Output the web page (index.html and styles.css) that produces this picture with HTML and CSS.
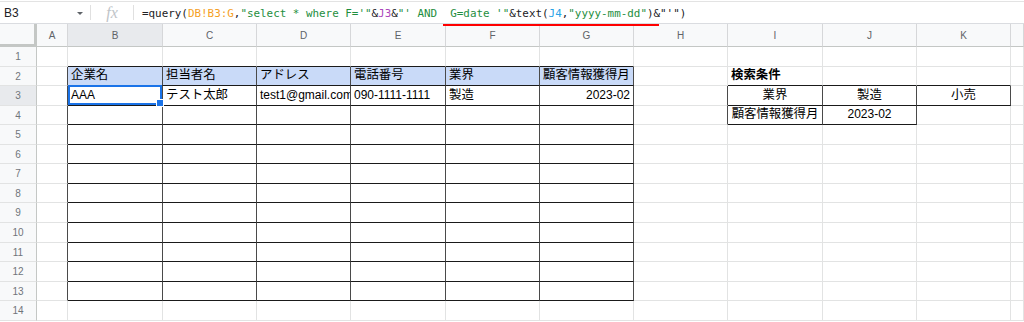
FILE: index.html
```html
<!DOCTYPE html>
<html lang="ja">
<head>
<meta charset="utf-8">
<title>Sheet</title>
<link rel="stylesheet" href="styles.css">
</head>
<body>
<div class="fbar">
  <div class="namebox"><span>B3</span><span class="tri"></span></div>
  <div class="sep"></div>
  <div class="fx">fx</div>
  <div class="sep"></div>
  <div class="formula">=query(<span class="fo">DB!B3:G</span>,<span class="fg">"select * where F='"</span>&amp;<span class="fp">J3</span>&amp;<span class="fg">"' AND  G=date '"</span>&amp;text(<span class="fb">J4</span>,<span class="fg">"yyyy-mm-dd"</span>)&amp;"'")</div>
</div>
<div class="mark"></div>
<div class="sheet">
  <!-- header -->
  <div class="h corner"></div><div class="h">A</div><div class="h hs">B</div><div class="h">C</div><div class="h">D</div><div class="h">E</div><div class="h">F</div><div class="h">G</div><div class="h">H</div><div class="h">I</div><div class="h">J</div><div class="h">K</div><div class="h"></div>
  <!-- 1 -->
  <div class="r">1</div><div class="c"></div><div class="c bb"></div><div class="c bb"></div><div class="c bb"></div><div class="c bb"></div><div class="c bb"></div><div class="c bb"></div><div class="c"></div><div class="c"></div><div class="c"></div><div class="c"></div><div class="c"></div>
  <!-- 2 -->
  <div class="r">2</div><div class="c br"></div><div class="c ja hd br bb">企業名</div><div class="c ja hd br bb">担当者名</div><div class="c ja hd br bb">アドレス</div><div class="c ja hd br bb">電話番号</div><div class="c ja hd br bb">業界</div><div class="c ja hd br bb">顧客情報獲得月</div><div class="c"></div><div class="c ja bb bold">検索条件</div><div class="c bb"></div><div class="c bb"></div><div class="c"></div>
  <!-- 3 -->
  <div class="r rs">3</div><div class="c br"></div><div class="c br bb sel">AAA</div><div class="c ja br bb">テスト太郎</div><div class="c br bb">test1@gmail.com</div><div class="c br bb">090-1111-1111</div><div class="c ja br bb">製造</div><div class="c br bb right">2023-02</div><div class="c br"></div><div class="c ja br bb mid">業界</div><div class="c ja br bb mid">製造</div><div class="c ja br bb mid">小売</div><div class="c"></div>
  <!-- 4 -->
  <div class="r">4</div><div class="c br"></div><div class="c br bb"></div><div class="c br bb"></div><div class="c br bb"></div><div class="c br bb"></div><div class="c br bb"></div><div class="c br bb"></div><div class="c br"></div><div class="c ja br bb mid">顧客情報獲得月</div><div class="c br bb mid">2023-02</div><div class="c"></div><div class="c"></div>
  <!-- 5 -->
  <div class="r">5</div><div class="c br"></div><div class="c br bb"></div><div class="c br bb"></div><div class="c br bb"></div><div class="c br bb"></div><div class="c br bb"></div><div class="c br bb"></div><div class="c"></div><div class="c"></div><div class="c"></div><div class="c"></div><div class="c"></div>
  <!-- 6 -->
  <div class="r">6</div><div class="c br"></div><div class="c br bb"></div><div class="c br bb"></div><div class="c br bb"></div><div class="c br bb"></div><div class="c br bb"></div><div class="c br bb"></div><div class="c"></div><div class="c"></div><div class="c"></div><div class="c"></div><div class="c"></div>
  <!-- 7 -->
  <div class="r">7</div><div class="c br"></div><div class="c br bb"></div><div class="c br bb"></div><div class="c br bb"></div><div class="c br bb"></div><div class="c br bb"></div><div class="c br bb"></div><div class="c"></div><div class="c"></div><div class="c"></div><div class="c"></div><div class="c"></div>
  <!-- 8 -->
  <div class="r">8</div><div class="c br"></div><div class="c br bb"></div><div class="c br bb"></div><div class="c br bb"></div><div class="c br bb"></div><div class="c br bb"></div><div class="c br bb"></div><div class="c"></div><div class="c"></div><div class="c"></div><div class="c"></div><div class="c"></div>
  <!-- 9 -->
  <div class="r">9</div><div class="c br"></div><div class="c br bb"></div><div class="c br bb"></div><div class="c br bb"></div><div class="c br bb"></div><div class="c br bb"></div><div class="c br bb"></div><div class="c"></div><div class="c"></div><div class="c"></div><div class="c"></div><div class="c"></div>
  <!-- 10 -->
  <div class="r">10</div><div class="c br"></div><div class="c br bb"></div><div class="c br bb"></div><div class="c br bb"></div><div class="c br bb"></div><div class="c br bb"></div><div class="c br bb"></div><div class="c"></div><div class="c"></div><div class="c"></div><div class="c"></div><div class="c"></div>
  <!-- 11 -->
  <div class="r">11</div><div class="c br"></div><div class="c br bb"></div><div class="c br bb"></div><div class="c br bb"></div><div class="c br bb"></div><div class="c br bb"></div><div class="c br bb"></div><div class="c"></div><div class="c"></div><div class="c"></div><div class="c"></div><div class="c"></div>
  <!-- 12 -->
  <div class="r">12</div><div class="c br"></div><div class="c br bb"></div><div class="c br bb"></div><div class="c br bb"></div><div class="c br bb"></div><div class="c br bb"></div><div class="c br bb"></div><div class="c"></div><div class="c"></div><div class="c"></div><div class="c"></div><div class="c"></div>
  <!-- 13 -->
  <div class="r">13</div><div class="c br"></div><div class="c br bb"></div><div class="c br bb"></div><div class="c br bb"></div><div class="c br bb"></div><div class="c br bb"></div><div class="c br bb"></div><div class="c"></div><div class="c"></div><div class="c"></div><div class="c"></div><div class="c"></div>
  <!-- 14 -->
  <div class="r">14</div><div class="c"></div><div class="c"></div><div class="c"></div><div class="c"></div><div class="c"></div><div class="c"></div><div class="c"></div><div class="c"></div><div class="c"></div><div class="c"></div><div class="c"></div><div class="c"></div>
</div>
</body>
</html>
```
FILE: styles.css
```css
* { box-sizing: border-box; }
html, body { margin: 0; padding: 0; }
body {
  width: 1024px;
  height: 322px;
  overflow: hidden;
  background: #fff;
  position: relative;
  font-family: "Liberation Sans", Arial, "Noto Sans CJK JP", sans-serif;
  color: #000;
}

/* formula bar */
.fbar {
  margin-top: 1px;
  height: 23px;
  border-top: 1px solid #e3e3e3;
  border-bottom: 1px solid #dadce0;
  display: flex;
  align-items: center;
}
.namebox {
  width: 90px;
  height: 100%;
  display: flex;
  align-items: center;
  justify-content: space-between;
  padding: 0 7px 0 4px;
  font-size: 12px;
  color: #202124;
}
.tri {
  width: 0;
  height: 0;
  border-left: 3px solid transparent;
  border-right: 3px solid transparent;
  border-top: 3px solid #5f6368;
  margin-top: 2px;
}
.sep {
  width: 1px;
  height: 15px;
  background: #e0e0e0;
}
.fx {
  width: 42px;
  text-align: center;
  font-family: "Liberation Serif", "DejaVu Serif", serif;
  font-style: italic;
  font-size: 16px;
  color: #c0c4c8;
  line-height: 20px;
}
.formula {
  padding-left: 8px;
  font-family: "DejaVu Sans Mono", "Liberation Mono", monospace;
  font-size: 10.9px;
  color: #202124;
  white-space: pre;
  padding-top: 1px;
}
.fo { color: #f5a01e; }
.fg { color: #1e8e3e; }
.fp { color: #ab47bc; }
.fb { color: #29a3e6; }

.mark {
  position: absolute;
  left: 443px;
  top: 24px;
  width: 216px;
  height: 2px;
  background: #ff0000;
  z-index: 5;
}

/* sheet grid */
.sheet {
  display: grid;
  grid-template-columns: 37px 31px 95px 94px 94px 95px 94px 94px 94px 95px 94px 94px 1fr;
  grid-template-rows: 23px 20px 19px 20px 19px 20px 19px 20px 19px 20px 20px 19px 20px 19px 20px;
}
.h {
  background: #f8f9fa;
  border-right: 1px solid #d6d7d9;
  border-bottom: 1px solid #c4c7c5;
  display: flex;
  align-items: center;
  justify-content: center;
  font-size: 10px;
  color: #5f6368;
  padding-top: 1px;
}
.hs { background: #e8eaed; }
.corner {
  border-right: 3px solid #c4c7c5;
  border-bottom: 3px solid #c4c7c5;
}
.r {
  background: #f8f9fa;
  border-right: 1px solid #c4c7c5;
  border-bottom: 1px solid #e2e3e3;
  display: flex;
  align-items: center;
  justify-content: center;
  font-size: 10px;
  color: #70757a;
}
.rs { background: #e8eaed; }
.c {
  border-right: 1px solid #e2e3e3;
  border-bottom: 1px solid #e2e3e3;
  font-size: 12px;
  line-height: 15px;
  padding: 0 3px 2px;
  display: flex;
  align-items: flex-end;
  white-space: nowrap;
  overflow: hidden;
}
.ja { font-size: 12.4px; }
.br { border-right-color: #4a4a4a; }
.bb { border-bottom-color: #1a1a1a; }
.hd { background: #c9daf8; }
.bold { font-weight: bold; overflow: visible; }
.right { justify-content: flex-end; }
.mid { justify-content: center; }
.sel {
  position: relative;
  overflow: visible;
  z-index: 3;
}
.sel::before {
  content: "";
  position: absolute;
  left: 0;
  top: -1px;
  right: 0;
  bottom: 0;
  border: 2px solid #1a73e8;
}
.sel::after {
  content: "";
  position: absolute;
  right: -2px;
  bottom: -2px;
  width: 6px;
  height: 6px;
  background: #1a73e8;
  border: 1px solid #fff;
}
```
